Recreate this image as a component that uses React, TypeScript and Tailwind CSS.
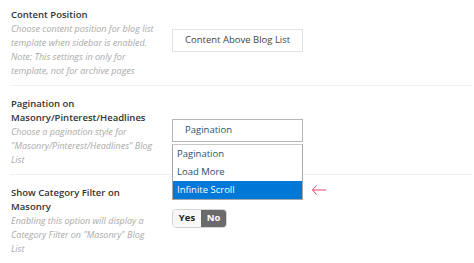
import React from "react";

const font = { fontFamily: '"Open Sans", "Liberation Sans", sans-serif' };

interface SettingRowProps {
  title: string[];
  desc: string[];
  last?: boolean;
  pad?: string;
  children: React.ReactNode;
}

const SettingRow: React.FC<SettingRowProps> = ({ title, desc, last, pad, children }) => {
  return (
    <div className={`flex items-center ml-[10px] mr-[2px] ${last ? "" : "border-b border-[#f0f0f0]"} ${pad ?? "pt-[11px] pb-[7px]"}`}>
      <div className="w-[162px] pl-px leading-[14px]">
        {title.map((t) => (
          <div key={t} className="text-[9.5px] font-semibold text-[#333] whitespace-nowrap">
            {t}
          </div>
        ))}
        {desc.map((d) => (
          <div key={d} className="text-[9px] italic text-[#aaa] whitespace-nowrap">
            {d}
          </div>
        ))}
      </div>
      <div className="relative">{children}</div>
    </div>
  );
};

export default function App() {
  return (
    <div className="w-[474px] h-[263px] bg-white overflow-hidden" style={font}>
      <SettingRow
        title={["Content Position"]}
        desc={[
          "Choose content position for blog list",
          "template when sidebar is enabled.",
          "Note: This settings in only for",
          "template, not for archive pages",
        ]}
        pad="pt-[8px] pb-[7px]"
      >
        <div className="w-[131px] h-[23px] border border-[#e2e2e2] flex items-center pl-3 text-[9.5px] text-[#444] -mt-[5px]">
          Content Above Blog List
        </div>
      </SettingRow>

      <SettingRow
        title={["Pagination on", "Masonry/Pinterest/Headlines"]}
        desc={['Choose a pagination style for', '"Masonry/Pinterest/Headlines" Blog', "List"]}
      >
        <div className="w-[131px] h-[23px] border border-[#b5b5b5] flex items-center pl-3 text-[9.5px] text-[#2b4f72] -mt-[3px]">
          Pagination
        </div>
        <div className="absolute left-0 top-[22px] w-[131px] bg-white border border-[#a8a8a8] border-t-[#c8c8c8] z-10 text-[9.5px] text-[#2b4f72]">
          <div className="h-[18px] flex items-center pl-[4px]">Pagination</div>
          <div className="h-[18px] flex items-center pl-[4px]">Load More</div>
          <div className="h-[18px] flex items-center pl-[4px] bg-[#0078d7] text-white">Infinite Scroll</div>
        </div>
        <svg
          className="absolute left-[139px] top-[62px] z-10"
          width="16"
          height="12"
          viewBox="0 0 16 12"
          fill="none"
          stroke="#e5456e"
          strokeWidth="1"
        >
          <path d="M15 6H1.5M5.5 1.5L1.5 6L5.5 10.5" />
        </svg>
      </SettingRow>

      <SettingRow
        title={["Show Category Filter on", "Masonry"]}
        desc={["Enabling this option will display a", 'Category Filter on "Masonry" Blog', "List"]}
        last
      >
        <div className="flex h-[19px] w-[55px] rounded-[4px] border border-[#d4d4d4] overflow-hidden text-[9.5px] font-bold -mt-[5px]">
          <div className="w-[28px] flex items-center justify-center bg-[#f7f7f7] text-[#222]">Yes</div>
          <div className="flex-1 flex items-center justify-center bg-[#6b6b6b] text-white">No</div>
        </div>
      </SettingRow>
    </div>
  );
}
